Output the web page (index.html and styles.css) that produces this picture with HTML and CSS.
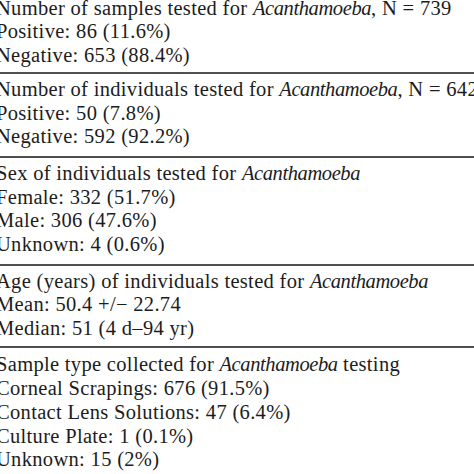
FILE: index.html
```html
<!DOCTYPE html>
<html>
<head>
<meta charset="utf-8">
<link rel="stylesheet" href="styles.css">
</head>
<body>
<div class="table">
  <div class="row r1">
    <div class="line">Number of samples tested for <i>Acanthamoeba</i>, N = 739</div>
    <div class="line">Positive: 86 (11.6%)</div>
    <div class="line">Negative: 653 (88.4%)</div>
  </div>
  <div class="row r2">
    <div class="line">Number of individuals tested for <i>Acanthamoeba</i>, N = 642</div>
    <div class="line">Positive: 50 (7.8%)</div>
    <div class="line">Negative: 592 (92.2%)</div>
  </div>
  <div class="row r3">
    <div class="line">Sex of individuals tested for <i>Acanthamoeba</i></div>
    <div class="line">Female: 332 (51.7%)</div>
    <div class="line">Male: 306 (47.6%)</div>
    <div class="line">Unknown: 4 (0.6%)</div>
  </div>
  <div class="row r4">
    <div class="line">Age (years) of individuals tested for <i>Acanthamoeba</i></div>
    <div class="line">Mean: 50.4 +/− 22.74</div>
    <div class="line">Median: 51 (4 d–94 yr)</div>
  </div>
  <div class="row r5">
    <div class="line">Sample type collected for <i>Acanthamoeba</i> testing</div>
    <div class="line">Corneal Scrapings: 676 (91.5%)</div>
    <div class="line">Contact Lens Solutions: 47 (6.4%)</div>
    <div class="line">Culture Plate: 1 (0.1%)</div>
    <div class="line">Unknown: 15 (2%)</div>
  </div>
</div>
</body>
</html>
```
FILE: styles.css
```css
html, body {
  margin: 0;
  padding: 0;
  background: #ffffff;
  overflow: hidden;
}
body {
  width: 474px;
  height: 474px;
}
.table {
  display: flex;
  flex-direction: column;
  margin-top: -7px;
  font-family: "Liberation Serif", "Times New Roman", serif;
  font-size: 20.5px;
  line-height: 23.4px;
  letter-spacing: 0.32px;
  color: #1c1c1c;
}
.row {
  padding: 4px 0 8px 0;
  border-bottom: 2px solid #4f4f4f;
}
.row.r1 {
  padding-bottom: 5px;
}
.row.r4 {
  padding-bottom: 6px;
}
.row.r5 {
  padding-top: 5px;
  border-bottom: none;
}
.row.r5 .line {
  line-height: 23.8px;
}
.line {
  white-space: nowrap;
  margin-left: -4px;
}
.line i {
  font-style: italic;
  letter-spacing: -0.4px;
}
```
